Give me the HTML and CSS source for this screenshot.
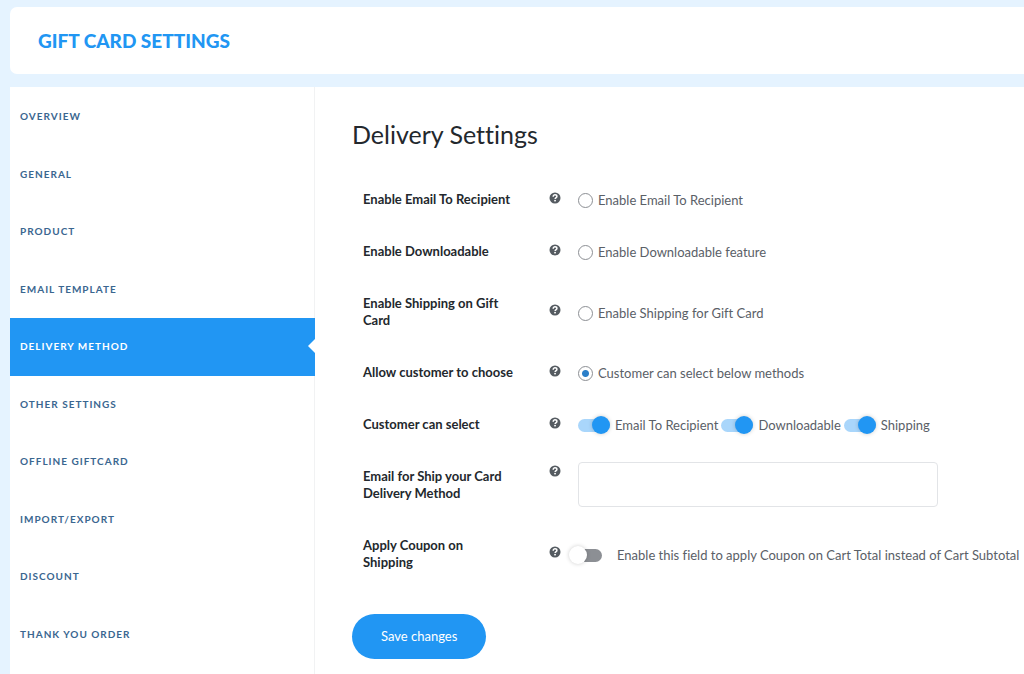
FILE: index.html
```html
<!DOCTYPE html>
<html lang="en">
<head>
    <meta charset="UTF-8">
    <meta name="viewport" content="width=device-width, initial-scale=1.0">
    <title>Gift Card Settings</title>
    <link rel="stylesheet" href="styles.css">
</head>
<body>
    <svg width="0" height="0" class="sprite" aria-hidden="true">
        <symbol id="help" viewBox="0 0 12 12">
            <circle cx="6" cy="6" r="5.5" fill="#555b61"/>
            <path d="M4.2 4.7C4.2 3.3 5.1 2.8 6 2.8s1.900.5 1.900 1.600C7.900 5.500 6.200 5.600 6.100 7" fill="none" stroke="#fff" stroke-width="1.5"/>
            <rect x="5.200" y="7.900" width="1.700" height="1.500" fill="#fff"/>
        </symbol>
    </svg>
    <header class="header">
        <h1>GIFT CARD SETTINGS</h1>
    </header>
    <div class="wrapper">
        <nav class="tabs">
            <a href="#">OVERVIEW</a>
            <a href="#">GENERAL</a>
            <a href="#">PRODUCT</a>
            <a href="#">EMAIL TEMPLATE</a>
            <a href="#" class="active">DELIVERY METHOD</a>
            <a href="#">OTHER SETTINGS</a>
            <a href="#">OFFLINE GIFTCARD</a>
            <a href="#">IMPORT/EXPORT</a>
            <a href="#">DISCOUNT</a>
            <a href="#">THANK YOU ORDER</a>
        </nav>
        <main class="content">
            <h2>Delivery Settings</h2>
            <form>
                <div class="row">
                    <div class="title">Enable Email To Recipient</div>
                    <svg class="help"><use href="#help"/></svg>
                    <div class="field">
                        <label class="option"><input type="radio" name="method">Enable Email To Recipient</label>
                    </div>
                </div>
                <div class="row">
                    <div class="title">Enable Downloadable</div>
                    <svg class="help"><use href="#help"/></svg>
                    <div class="field">
                        <label class="option"><input type="radio" name="method">Enable Downloadable feature</label>
                    </div>
                </div>
                <div class="row">
                    <div class="title">Enable Shipping on Gift Card</div>
                    <svg class="help"><use href="#help"/></svg>
                    <div class="field">
                        <label class="option"><input type="radio" name="method">Enable Shipping for Gift Card</label>
                    </div>
                </div>
                <div class="row">
                    <div class="title">Allow customer to choose</div>
                    <svg class="help"><use href="#help"/></svg>
                    <div class="field">
                        <label class="option"><input type="radio" name="method" checked>Customer can select below methods</label>
                    </div>
                </div>
                <div class="row">
                    <div class="title">Customer can select</div>
                    <svg class="help"><use href="#help"/></svg>
                    <div class="field switches">
                        <label class="switch"><input type="checkbox" checked>Email To Recipient</label>
                        <label class="switch"><input type="checkbox" checked>Downloadable</label>
                        <label class="switch"><input type="checkbox" checked>Shipping</label>
                    </div>
                </div>
                <div class="row row-text">
                    <label class="title" for="ship-email">Email for Ship your Card Delivery Method</label>
                    <svg class="help"><use href="#help"/></svg>
                    <div class="field">
                        <input type="text" id="ship-email">
                    </div>
                </div>
                <div class="row">
                    <div class="title">Apply Coupon on Shipping</div>
                    <svg class="help"><use href="#help"/></svg>
                    <div class="field">
                        <label class="switch switch-wide"><input type="checkbox">Enable this field to apply Coupon on Cart Total instead of Cart Subtotal</label>
                    </div>
                </div>
                <button type="submit" class="save">Save changes</button>
            </form>
        </main>
    </div>
</body>
</html>
```

FILE: styles.css
```css
* {
    box-sizing: border-box;
}
body {
    margin: 0;
    padding: 7px 0 0 10px;
    background-color: #e5f3ff;
    font-family: Lato, sans-serif;
    font-size: 13px;
    line-height: 17px;
    font-variant-ligatures: none;
    color: #5a6067;
    overflow-x: hidden;
}
.sprite {
    position: absolute;
}
.header {
    background-color: #fff;
    border-radius: 7px 0 0 7px;
    padding: 22px 28px;
    margin-bottom: 13px;
}
.header h1 {
    margin: 0;
    font-size: 19px;
    line-height: 23px;
    font-weight: 900;
    color: #2196f3;
}
.wrapper {
    display: flex;
    min-height: calc(100vh - 87px);
    background-color: #fff;
}
.tabs {
    flex: 0 0 304px;
    display: grid;
    grid-auto-rows: 1fr;
    align-self: flex-start;
    height: 576px;
    padding-top: 1px;
}
.tabs a {
    display: flex;
    align-items: center;
    padding-left: 10px;
    font-size: 10px;
    font-weight: 700;
    letter-spacing: 1px;
    color: #3a6690;
    text-decoration: none;
}
.tabs .active {
    position: relative;
    margin-right: -1px;
    background-color: #2196f3;
    color: #fff;
}
.tabs .active::after {
    content: "";
    position: absolute;
    right: 0;
    top: 50%;
    margin-top: -8px;
    border: 7px solid transparent;
    border-left: 0;
    border-right-color: #fff;
}
.content {
    flex: 1;
    min-width: 0;
    padding: 31px 0 14px 37px;
    border-left: 1px solid #f1f2f3;
}
.content h2 {
    margin: 0 0 24px;
    font-size: 25px;
    line-height: 32px;
    font-weight: 400;
    color: #23282d;
}
.row {
    display: flex;
    align-items: center;
    padding: 16px 0 17px 11px;
}
.title {
    flex: 0 0 150px;
    margin-right: 36px;
    padding: 1px 0;
    font-weight: 700;
    color: #23282d;
}
.help {
    flex: none;
    width: 12px;
    height: 12px;
    margin: 0 17px 4px 0;
}
.field {
    flex: 1;
    padding-top: 2px;
    white-space: nowrap;
}
.option,
.switch {
    display: flex;
    align-items: center;
}
.option input {
    appearance: none;
    flex: none;
    width: 15px;
    height: 15px;
    margin: 0 5px 0 0;
    border: 1px solid #8c8f94;
    border-radius: 50%;
    background-color: #fff;
}
.option input:checked {
    background-image: radial-gradient(circle, #2b7fc9 3px, transparent 4px);
}
.switches {
    display: flex;
    gap: 3px;
}
.switch input {
    appearance: none;
    position: relative;
    flex: none;
    width: 32px;
    height: 13px;
    margin: 0 5px 0 0;
    border-radius: 7px;
    background-color: #8c8f94;
}
/* the knob */
.switch input::before {
    content: "";
    position: absolute;
    top: -3px;
    left: -9px;
    width: 18px;
    height: 18px;
    border-radius: 50%;
    background-color: #fff;
    box-shadow: 0 0 4px rgba(0, 0, 0, 0.2);
}
.switch input:checked {
    background-color: #a9d6fb;
}
.switch input:checked::before {
    left: auto;
    right: 0;
    background-color: #2196f3;
}
.switch-wide input {
    width: 24px;
    margin-right: 15px;
}
.row-text {
    padding-top: 11px;
    padding-bottom: 13px;
}
.row-text .help {
    align-self: flex-start;
    margin-top: 3px;
}
.row-text .field {
    padding-top: 0;
}
.row-text input {
    display: block;
    width: 360px;
    max-width: 100%;
    height: 45px;
    border: 1px solid #e2e4e7;
    border-radius: 4px;
    background-color: #fff;
}
.save {
    display: block;
    margin-top: 25px;
    padding: 14px 29px;
    border: 0;
    border-radius: 23px;
    background-color: #2196f3;
    color: #fff;
    font-family: inherit;
    font-size: 13px;
    line-height: 17px;
}
```
